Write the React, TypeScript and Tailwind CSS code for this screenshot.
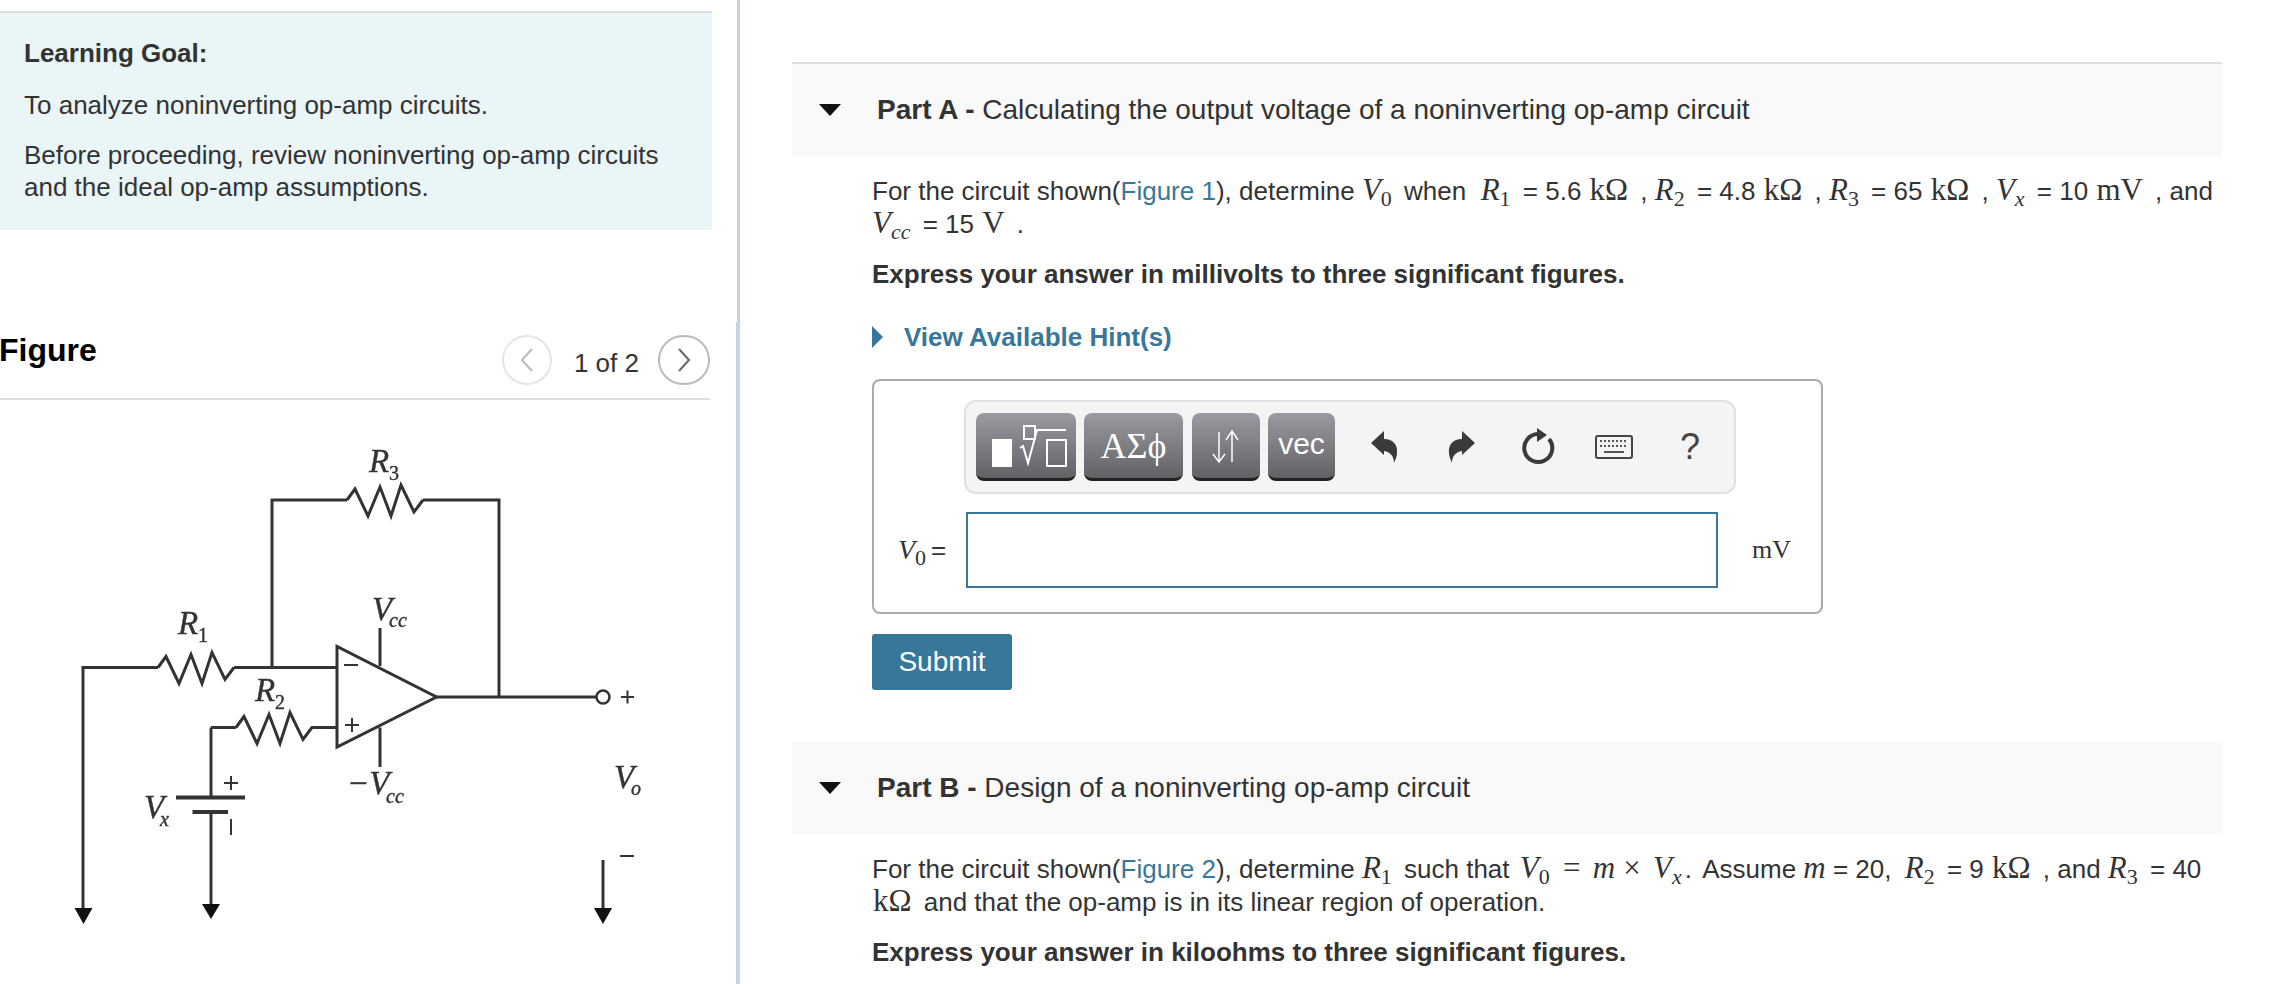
import type { ReactNode } from 'react';

const serif = "font-['Liberation_Serif',serif]";

function M({ children }: { children: ReactNode }) {
  return <span className="font-['Liberation_Serif',serif] text-[31px] italic">{children}</span>;
}

function Up({ children }: { children: ReactNode }) {
  return <span className="ml-[1px] mr-[5px] font-['Liberation_Serif',serif] text-[31px]">{children}</span>;
}

function Sub({ children, italic }: { children: ReactNode; italic?: boolean }) {
  return (
    <sub className={`relative bottom-[-6px] mr-[5px] align-baseline font-['Liberation_Serif',serif] text-[22px] leading-none ${italic ? 'italic' : 'not-italic'}`}>
      {children}
    </sub>
  );
}

function Zig({ x, y, pts }: { x: number; y: number; pts: number[][] }) {
  const d = pts.map((p, i) => `${i ? 'L' : 'M'}${x + p[0]} ${y + p[1]}`).join(' ');
  return <path d={d} />;
}

const zig = [[0, 0], [8, -11], [21, 16], [33, -13], [44, 16], [54, -15], [67, 12], [76, 0]];

function Circuit() {
  return (
    <svg className="mt-[20px] block h-[564px] w-[736px] blur-[0.5px]" viewBox="0 420 736 564">
      <g fill="none" stroke="#333" strokeWidth="3">
        <path d="M83 908V667.5H158M234 667.5H337M272 667.5V500H347M423 500H499V697M436 697H597" />
        <Zig x={158} y={667.5} pts={zig} />
        <Zig x={347} y={500} pts={zig} />
        <Zig x={236} y={727.5} pts={zig} />
        <path d="M211 727.5H236M311 727.5H337M211 727.5V798M211 812V905M603 860V909M380 628V666M380 727.5V767" />
        <path d="M337 646.5V747L436.5 697Z" />
        <path d="M176 797.5H245M192.5 812H228" strokeWidth="4" />
        <circle cx="603" cy="697" r="6.5" strokeWidth="2.5" />
        <path d="M231 819V835" strokeWidth="2" />
        <path d="M621 697H634M627.5 690.5V703.5M224 783H238M231 776V790M344 665H358M345 725H359M352 718V732M620 856H634" strokeWidth="2" />
      </g>
      <path d="M74.5 908H92.5L83.5 924ZM202 904H220L211 919ZM594 908H612L603 924Z" fill="#111" />
      <g className="font-['Liberation_Serif',serif] italic" fill="#333" stroke="#333" strokeWidth="0.4" fontSize="33">
        <text x="369" y="472">R</text>
        <text x="389" y="480" fontSize="20" fontStyle="normal">3</text>
        <text x="178" y="634">R</text>
        <text x="198" y="642" fontSize="20" fontStyle="normal">1</text>
        <text x="255" y="701">R</text>
        <text x="275" y="709" fontSize="20" fontStyle="normal">2</text>
        <text x="372" y="620">V</text>
        <text x="389" y="627" fontSize="20">cc</text>
        <text x="347" y="794">−V</text>
        <text x="386" y="803" fontSize="20">cc</text>
        <text x="614" y="788">V</text>
        <text x="631" y="795" fontSize="20">o</text>
        <text x="144" y="818">V</text>
        <text x="160" y="826" fontSize="20">x</text>
      </g>
    </svg>
  );
}

function Toolbar() {
  const btn = 'flex h-[68px] items-center justify-center rounded-[8px] border-b-[3px] border-[#222] bg-gradient-to-b from-[#9a9aa2] to-[#626266] text-white';
  return (
    <div className="ml-[90px] flex h-[94px] w-[772px] items-center rounded-[12px] border-2 border-[#e0e0e0] bg-[#f4f4f4] pl-[10px]">
      <div className={`${btn} w-[100px]`}>
        <svg className="ml-[6px]" width="78" height="46" viewBox="0 0 78 46" fill="none" stroke="#fff" strokeWidth="2">
          <rect x="2" y="16" width="20" height="28" fill="#fff" stroke="none" />
          <rect x="34" y="3" width="11" height="13" />
          <path d="M30 25L33 23L38 40L47 7H76" />
          <rect x="57" y="17" width="19" height="26" />
        </svg>
      </div>
      <div className={`${btn} ml-[8px] w-[99px] ${serif} text-[36px]`}>ΑΣϕ</div>
      <div className={`${btn} ml-[9px] w-[68px]`}>
        <svg width="30" height="34" viewBox="0 0 30 34" fill="none" stroke="#fff" strokeWidth="1.5">
          <path d="M8 3V32M2 25L8 33L14 25M21 33V3M15 11L21 2L27 11" />
        </svg>
      </div>
      <div className={`${btn} ml-[8px] w-[67px] pb-[3px] text-[30px]`}>vec</div>
      <svg className="ml-[36px]" width="27" height="32" viewBox="0 0 27 32" fill="#3a3a3a">
        <path d="M0 12L13 0V8C22 8 27 14 26 22C26 26 24 29 23 32C23 26 20 21 13 20V24Z" />
      </svg>
      <svg className="ml-[50px]" width="27" height="32" viewBox="0 0 27 32" fill="#3a3a3a">
        <path d="M27 12L14 0V8C5 8 0 14 1 22C1 26 3 29 4 32C4 26 7 21 14 20V24Z" />
      </svg>
      <svg className="ml-[47px]" width="36" height="38" viewBox="0 0 36 38" fill="none" stroke="#3a3a3a" strokeWidth="4">
        <path d="M16 6A14 14 0 1 0 27 11" />
        <path d="M15 0L25 7L15 14Z" fill="#3a3a3a" stroke="none" />
      </svg>
      <svg className="ml-[37px]" width="38" height="24" viewBox="0 0 38 24" fill="none">
        <rect x="1" y="1" width="36" height="22" rx="2" fill="#f4f4f4" stroke="#444" strokeWidth="2" />
        <path d="M5 6H33M5 11H33" stroke="#555" strokeWidth="2" strokeDasharray="2 2" />
        <path d="M9 17H29" stroke="#555" strokeWidth="2" />
      </svg>
      <span className="ml-[47px] text-[36px] leading-none text-[#444]">?</span>
    </div>
  );
}

export default function App() {
  return (
    <div className="flex h-[984px] w-[2272px] overflow-hidden bg-white font-['Liberation_Sans',Arial,sans-serif] text-[26px] leading-[32px] text-[#333]">
      <div className="w-[736px] shrink-0 pt-[11px]">
        <div className="h-[219px] w-[712px] border-t-2 border-[#ddd] bg-[#e9f5f7] pl-[24px] pt-[24px]">
          <p className="font-bold">Learning Goal:</p>
          <p className="mt-[20px]">To analyze noninverting op-amp circuits.</p>
          <p className="mt-[18px] w-[680px]">Before proceeding, review noninverting op-amp circuits and the ideal op-amp assumptions.</p>
        </div>
        <div className="mt-[103px] flex h-[67px] w-[710px] items-start justify-between border-b-2 border-[#ddd]">
          <h2 className="-ml-[1px] -mt-[1px] text-[32px] font-bold leading-[36px] text-black">Figure</h2>
          <div className="mt-[2px] flex items-center">
            <span className="flex h-[50px] w-[50px] items-center justify-center rounded-full border-2 border-[#e5e5e5] text-[#bbb]">
              <svg width="14" height="24" viewBox="0 0 14 24" fill="none" stroke="currentColor" strokeWidth="2"><path d="M12 1L2 12L12 23" /></svg>
            </span>
            <span className="ml-[22px] mt-[6px]">1 of 2</span>
            <span className="ml-[19px] flex h-[50px] w-[52px] items-center justify-center rounded-full border-2 border-[#bbb] text-[#666]">
              <svg width="14" height="24" viewBox="0 0 14 24" fill="none" stroke="currentColor" strokeWidth="2"><path d="M2 1L12 12L2 23" /></svg>
            </span>
          </div>
        </div>
        <Circuit />
      </div>

      <div className="flex w-[4px] shrink-0 flex-col items-end">
        <div className="h-[322px] w-[3px] bg-[#c5d3e3]" />
        <div className="w-[4px] flex-1 bg-[#c5d3e3]" />
      </div>

      <div className="ml-[52px] w-[1430px] shrink-0 pt-[62px]">
        <div className="flex h-[94px] items-center border-t-2 border-[#ddd] bg-[#f9f9f9]">
          <span className="ml-[27px] h-0 w-0 border-x-[11px] border-t-[12px] border-x-transparent border-t-[#111]" />
          <p className="ml-[36px] text-[28px]"><b>Part A -</b> Calculating the output voltage of a noninverting op-amp circuit</p>
        </div>

        <div className="pl-[80px] pt-[18px]">
          <p className="whitespace-nowrap">
            For the circuit shown(<span className="text-[#37779a]">Figure 1</span>), determine <M>V</M><Sub>0</Sub> when &nbsp;<M>R</M><Sub>1</Sub> = 5.6 <Up>kΩ</Up> , <M>R</M><Sub>2</Sub> = 4.8 <Up>kΩ</Up> , <M>R</M><Sub>3</Sub> = 65 <Up>kΩ</Up> , <M>V</M><Sub italic>x</Sub> = 10 <Up>mV</Up> , and
            <br />
            <M>V</M><Sub italic>cc</Sub> = 15 <Up>V</Up> .
          </p>
          <p className="mt-[18px] font-bold">Express your answer in millivolts to three significant figures.</p>
          <p className="mt-[31px] flex items-center font-bold text-[#37779a]">
            <span className="h-0 w-0 border-y-[11px] border-l-[11px] border-y-transparent border-l-[#37779a]" />
            <span className="ml-[21px]">View Available Hint(s)</span>
          </p>

          <div className="mt-[26px] h-[235px] w-[951px] rounded-[8px] border-2 border-[#aaa] pt-[19px]">
            <Toolbar />
            <div className="mt-[18px] flex items-center">
              <span className={`ml-[24px] w-[68px] ${serif} text-[28px] italic`}>
                V<Sub>0</Sub><span className="font-['Liberation_Sans',sans-serif] text-[26px] not-italic">=</span>
              </span>
              <div className="h-[76px] w-[752px] border-2 border-[#37779a] bg-white" />
              <span className={`ml-[34px] ${serif}`}>mV</span>
            </div>
          </div>

          <button className="mt-[20px] block h-[56px] w-[140px] rounded-[3px] bg-[#37779a] text-[28px] text-white">Submit</button>
        </div>

        <div className="mt-[52px] flex h-[92px] items-center bg-[#f9f9f9]">
          <span className="ml-[27px] h-0 w-0 border-x-[11px] border-t-[12px] border-x-transparent border-t-[#111]" />
          <p className="ml-[36px] text-[28px]"><b>Part B -</b> Design of a noninverting op-amp circuit</p>
        </div>

        <div className="pl-[80px] pt-[18px]">
          <p className="whitespace-nowrap">
            For the circuit shown(<span className="text-[#37779a]">Figure 2</span>), determine <M>R</M><Sub>1</Sub> such that <span className="ml-[3px]"><M>V</M></span><Sub>0</Sub> <Up>=</Up> <M>m</M> <Up>×</Up> <M>V</M><Sub italic>x</Sub><span className="-ml-[2px]">.</span> <span className="ml-[3px]">Assume</span> <M>m</M> = 20, <span className="ml-[6px]"><M>R</M></span><Sub>2</Sub> = 9 <Up>kΩ</Up> , and <M>R</M><Sub>3</Sub> = 40
            <br />
            <Up>kΩ</Up> and that the op-amp is in its linear region of operation.
          </p>
          <p className="mt-[18px] font-bold">Express your answer in kiloohms to three significant figures.</p>
        </div>
      </div>
    </div>
  );
}
